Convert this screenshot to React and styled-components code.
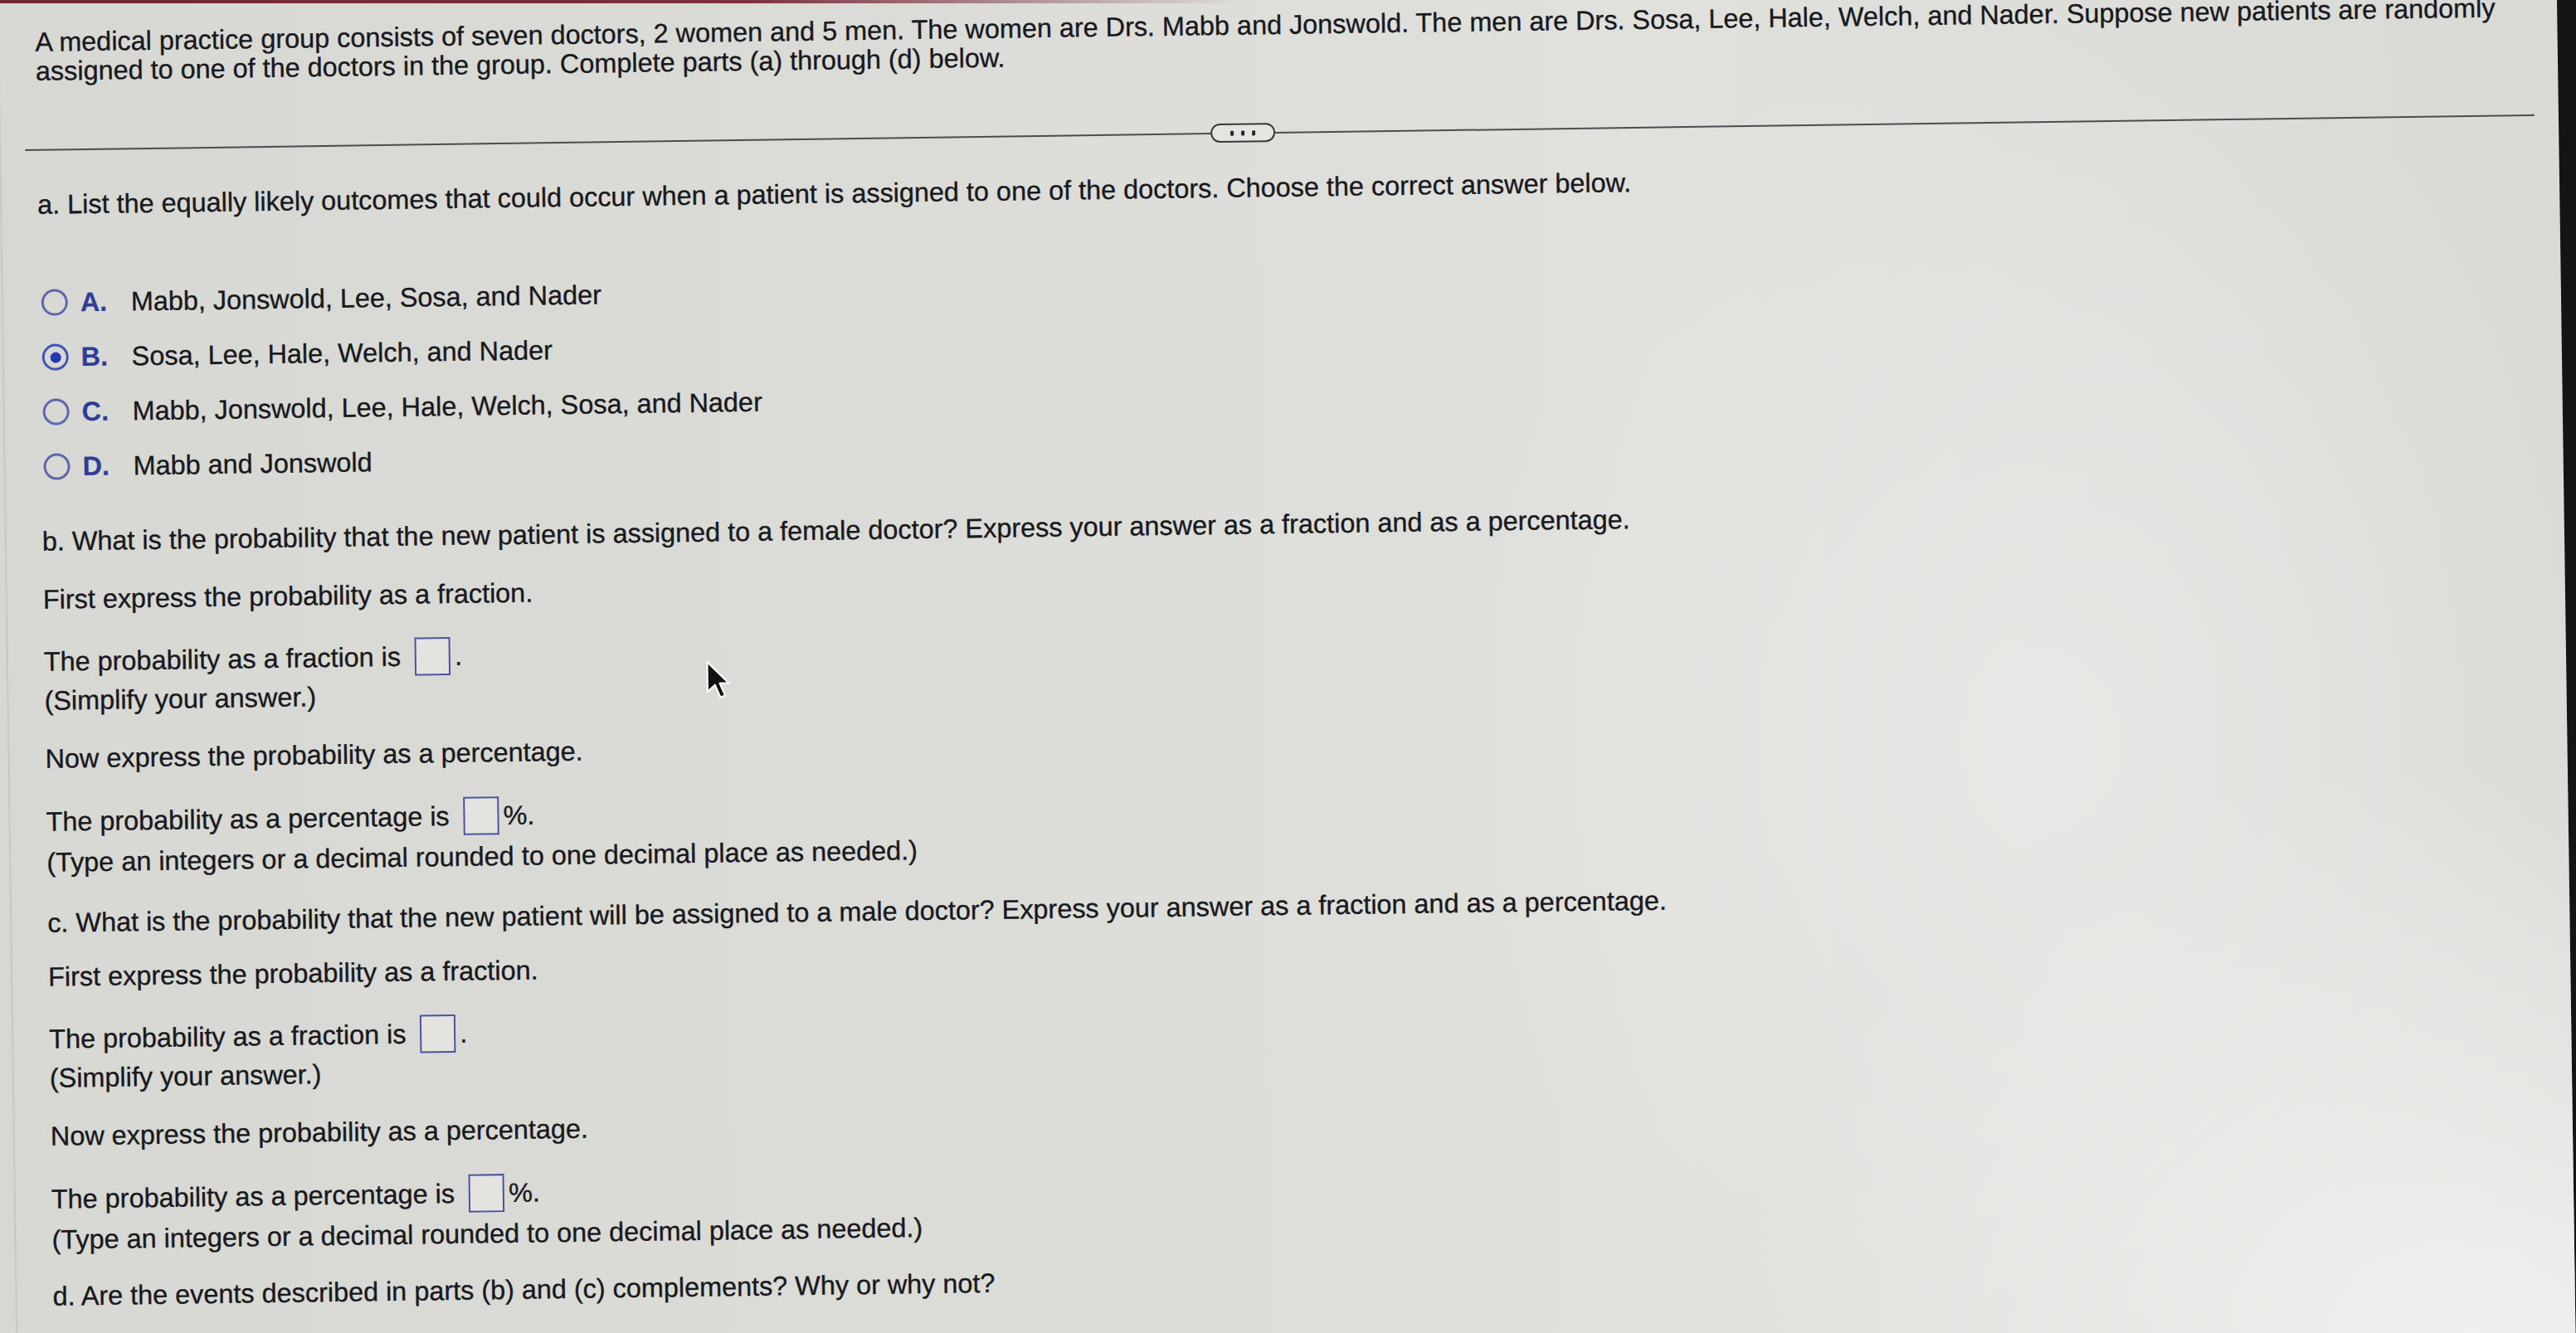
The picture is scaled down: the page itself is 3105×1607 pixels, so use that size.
import React from "react";
import styled, { createGlobalStyle } from "styled-components";

const GlobalStyle = createGlobalStyle`
  html, body {
    margin: 0;
    padding: 0;
    width: 3105px;
    height: 1607px;
    overflow: hidden;
    background: #141414;
  }
  * {
    box-sizing: border-box;
  }
`;

const Photo = styled.div`
  position: relative;
  width: 3105px;
  height: 1607px;
  overflow: hidden;
`;

const TopEdge = styled.div`
  position: absolute;
  top: 0;
  left: 0;
  width: 1500px;
  height: 4px;
  background: linear-gradient(90deg, #6f2733 0%, #7c3040 60%, rgba(124, 48, 64, 0) 100%);
  z-index: 2;
`;

const Screen = styled.div`
  width: 3121px;
  height: 1780px;
  margin: -50px 0 0 -40px;
  padding: 50px 0 0 40px;
  transform-origin: 0 0;
  transform: rotate(-0.8deg);
  background:
    radial-gradient(ellipse 900px 700px at 96% 96%, rgba(244, 244, 242, 0.85), rgba(244, 244, 242, 0) 100%),
    radial-gradient(ellipse 700px 900px at 80% 55%, rgba(236, 236, 234, 0.7), rgba(236, 236, 234, 0) 100%),
    linear-gradient(90deg, #d7d8d4 0%, #dbdcd8 35%, #e0e1dd 65%, #d9dad6 100%);
`;

const Content = styled.div`
  position: relative;
  height: 100%;
  margin-left: -4px;
  border-left: 2px solid #c8c9bf;
  padding: 1px 0 0 43px;
  font-family: "Liberation Sans", Arial, sans-serif;
  font-size: 32.4px;
  color: #19191d;
  -webkit-text-stroke: 0.35px #19191d;
`;

const Intro = styled.p`
  margin: 34px 0 0;
  line-height: 35px;
  white-space: nowrap;
`;

const DividerRow = styled.div`
  display: flex;
  align-items: center;
  width: 3025px;
  height: 23px;
  margin: 65px 0 0 -14px;
`;

const Rule = styled.div`
  height: 2px;
  background: #4c4c50;
  flex: ${(p) => (p.$grow ? 1 : "none")};
  width: ${(p) => (p.$grow ? "auto" : `${p.$w}px`)};
`;

const MoreButton = styled.div`
  width: 78px;
  height: 23px;
  border: 2px solid #38383c;
  border-radius: 12px;
  background: #e4e5e1;
  display: flex;
  align-items: center;
  justify-content: center;
  gap: 9px;
`;

const Dot = styled.span`
  width: 4px;
  height: 6px;
  border-radius: 1px;
  background: #26262a;
`;

const Line = styled.p`
  margin: ${(p) => p.$mt}px 0 0;
  line-height: 36px;
  white-space: nowrap;
`;

const Options = styled.div`
  display: flex;
  flex-direction: column;
  gap: 30px;
  margin-top: 82px;
`;

const Option = styled.div`
  display: flex;
  align-items: center;
  height: 36px;
  line-height: 36px;
`;

const Radio = styled.span`
  width: 32px;
  height: 32px;
  margin-left: 3px;
  border-radius: 50%;
  border: 3px solid ${(p) => (p.$checked ? "#4454b2" : "#5f66aa")};
  display: flex;
  align-items: center;
  justify-content: center;
  flex: none;

  &::after {
    content: "";
    display: ${(p) => (p.$checked ? "block" : "none")};
    width: 13px;
    height: 13px;
    border-radius: 50%;
    background: #2639b2;
  }
`;

const Letter = styled.span`
  width: 61px;
  margin-left: 15px;
  font-weight: bold;
  color: #303d98;
  -webkit-text-stroke: 0.2px #303d98;
  flex: none;
`;

const AnswerRow = styled.div`
  display: flex;
  align-items: center;
  height: 46px;
  margin-top: ${(p) => p.$mt}px;
  line-height: 36px;
  white-space: nowrap;
`;

const AnswerBox = styled.span`
  width: 43px;
  height: 46px;
  margin-left: 17px;
  border: 2px solid #4b539e;
  background: #e3e4e0;
  flex: none;
`;

const Trail = styled.span`
  margin-left: 5px;
`;

const Cursor = styled.svg`
  position: absolute;
  left: 840px;
  top: 808px;
  width: 32px;
  height: 50px;
`;

const options = [
  { key: "A", text: "Mabb, Jonswold, Lee, Sosa, and Nader" },
  { key: "B", text: "Sosa, Lee, Hale, Welch, and Nader", checked: true },
  { key: "C", text: "Mabb, Jonswold, Lee, Hale, Welch, Sosa, and Nader" },
  { key: "D", text: "Mabb and Jonswold" },
];

function ProbabilityPart({ question, mt, firstMt }) {
  return (
    <>
      <Line $mt={mt}>{question}</Line>
      <Line $mt={firstMt}>First express the probability as a fraction.</Line>
      <AnswerRow $mt={34}>
        <span>The probability as a fraction is</span>
        <AnswerBox />
        <Trail>.</Trail>
      </AnswerRow>
      <Line $mt={6}>(Simplify your answer.)</Line>
      <Line $mt={34}>Now express the probability as a percentage.</Line>
      <AnswerRow $mt={35}>
        <span>The probability as a percentage is</span>
        <AnswerBox />
        <Trail>%.</Trail>
      </AnswerRow>
      <Line $mt={8}>
        (Type an integers or a decimal rounded to one decimal place as needed.)
      </Line>
    </>
  );
}

export default function App() {
  return (
    <Photo>
      <GlobalStyle />
      <TopEdge />
      <Screen>
        <Content>
          <Intro>
            A medical practice group consists of seven doctors, 2 women and 5
            men. The women are Drs. Mabb and Jonswold. The men are Drs. Sosa,
            Lee, Hale, Welch, and Nader. Suppose new patients are randomly
            <br />
            assigned to one of the doctors in the group. Complete parts (a)
            through (d) below.
          </Intro>

          <DividerRow>
            <Rule $w={1429} />
            <MoreButton>
              <Dot />
              <Dot />
              <Dot />
            </MoreButton>
            <Rule $grow />
          </DividerRow>

          <Line $mt={37}>
            a. List the equally likely outcomes that could occur when a patient
            is assigned to one of the doctors. Choose the correct answer below.
          </Line>

          <Options>
            {options.map((o) => (
              <Option key={o.key}>
                <Radio $checked={o.checked} />
                <Letter>{o.key}.</Letter>
                <span>{o.text}</span>
              </Option>
            ))}
          </Options>

          <ProbabilityPart
            mt={54}
            firstMt={34}
            question="b. What is the probability that the new patient is assigned to a female doctor? Express your answer as a fraction and as a percentage."
          />
          <ProbabilityPart
            mt={37}
            firstMt={29}
            question="c. What is the probability that the new patient will be assigned to a male doctor? Express your answer as a fraction and as a percentage."
          />

          <Line $mt={32}>
            d. Are the events described in parts (b) and (c) complements? Why or
            why not?
          </Line>

          <Cursor viewBox="0 0 14 22">
            <path
              d="M1 1 L1 17 L5 13.4 L7.8 20 L10.4 18.9 L7.6 12.5 L12.5 12.5 Z"
              fill="#111"
              stroke="#f4f4f4"
              strokeWidth="1.1"
              strokeLinejoin="round"
            />
          </Cursor>
        </Content>
      </Screen>
    </Photo>
  );
}
